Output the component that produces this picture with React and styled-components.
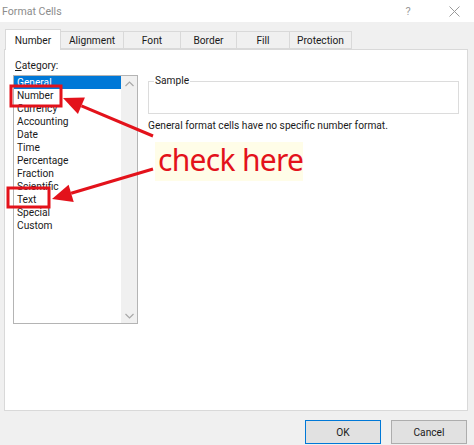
import styled, { createGlobalStyle } from 'styled-components';

const GlobalStyle = createGlobalStyle`
  html, body {
    margin: 0;
    padding: 0;
    background: #f0f0f0;
  }
  * {
    box-sizing: border-box;
  }
`;

const Dialog = styled.div`
  position: relative;
  display: flex;
  flex-direction: column;
  width: 474px;
  height: 445px;
  overflow: hidden;
  background: #f0f0f0;
  font-family: Roboto, 'Noto Sans', sans-serif;
  font-size: 10.2px;
  color: #1a1a1a;
`;

const TitleBar = styled.div`
  display: flex;
  align-items: center;
  height: 22px;
  padding-left: 2px;
  background: #ffffff;
`;

const Title = styled.span`
  flex: 1;
  font-size: 10.6px;
  color: #8c8c8c;
`;

const TitleButton = styled.span`
  display: flex;
  align-items: center;
  justify-content: center;
  width: ${(props) => props.w}px;
  margin-left: ${(props) => props.gap || 0}px;
  font-size: 11px;
  color: #9a9a9a;
`;

const TabRow = styled.div`
  display: flex;
  align-items: flex-end;
  height: 27px;
  padding-left: 5px;
`;

const Tab = styled.div`
  position: relative;
  z-index: ${(props) => (props.active ? 2 : 1)};
  display: flex;
  align-items: center;
  justify-content: center;
  width: ${(props) => props.w}px;
  height: ${(props) => (props.active ? 21 : 18)}px;
  margin-right: -1px;
  margin-bottom: ${(props) => (props.active ? -1 : 0)}px;
  border: 1px solid #d9d9d9;
  border-bottom: ${(props) => (props.active ? 'none' : '1px solid #d9d9d9')};
  background: ${(props) => (props.active ? '#ffffff' : '#f0f0f0')};
  color: #1a1a1a;
`;

const Panel = styled.div`
  display: flex;
  gap: 9px;
  width: 464px;
  height: 362px;
  margin-left: 4px;
  padding: 10px 8px 0 9px;
  border: 1px solid #d9d9d9;
  background: #ffffff;
`;

const LeftColumn = styled.div`
  display: flex;
  flex-direction: column;
  width: 125px;
`;

const FieldLabel = styled.div`
  height: 15px;
  line-height: 12px;
  padding-left: 1px;
  color: #1a1a1a;
`;

const ListBox = styled.div`
  display: flex;
  width: 125px;
  height: 249px;
  margin-left: -1px;
  border: 1px solid #b4b4b4;
  background: #ffffff;
`;

const ListItems = styled.div`
  flex: 1;
  display: flex;
  flex-direction: column;
`;

const ListItem = styled.div`
  height: 13px;
  padding-left: 3px;
  line-height: 13px;
  white-space: nowrap;
  background: ${(props) => (props.selected ? '#0078d7' : 'transparent')};
  color: ${(props) => (props.selected ? '#ffffff' : '#1a1a1a')};
`;

const ScrollTrack = styled.div`
  display: flex;
  flex-direction: column;
  justify-content: space-between;
  align-items: center;
  width: 16px;
  padding: 5px 0 4px;
  background: #f0f0f0;
`;

const RightColumn = styled.div`
  display: flex;
  flex-direction: column;
  flex: 1;
  padding-top: 15px;
`;

const SampleBox = styled.fieldset`
  width: 311px;
  height: 39px;
  margin: 0;
  padding: 0 6px;
  border: 1px solid #dcdcdc;

  legend {
    margin-left: -1px;
    padding: 0 1px;
    font-size: 10.2px;
    line-height: 12px;
    color: #1a1a1a;
  }
`;

const Description = styled.div`
  margin-top: 6px;
  line-height: 12px;
`;

const Footer = styled.div`
  display: flex;
  justify-content: flex-end;
  gap: 10px;
  padding: 9px 7px 0 0;
`;

const Button = styled.div`
  display: flex;
  align-items: center;
  justify-content: center;
  width: ${(props) => props.w}px;
  height: 24px;
  border: 1px solid ${(props) => (props.primary ? '#0078d7' : '#adadad')};
  background: #e1e1e1;
  color: #1a1a1a;
`;

const Annotations = styled.svg`
  position: absolute;
  left: 0;
  top: 0;
  z-index: 5;
  pointer-events: none;
`;

const Callout = styled.div`
  position: absolute;
  left: 155px;
  top: 142px;
  z-index: 4;
  width: 148px;
  height: 39px;
  padding-left: 3px;
  background: #fffde8;
  color: #e3121b;
  font-family: 'Noto Sans', 'Open Sans', sans-serif;
  font-size: 30px;
  line-height: 36px;
  letter-spacing: -0.7px;
  white-space: nowrap;
`;

const categories = [
  'General',
  'Number',
  'Currency',
  'Accounting',
  'Date',
  'Time',
  'Percentage',
  'Fraction',
  'Scientific',
  'Text',
  'Special',
  'Custom',
];

const tabs = [
  ['Number', 56],
  ['Alignment', 64],
  ['Font', 58],
  ['Border', 57],
  ['Fill', 54],
  ['Protection', 63],
];

const Chevron = ({ up }) => (
  <svg width="9" height="6" viewBox="0 0 9 6">
    <path
      d={up ? 'M0.5 5 L4.5 1 L8.5 5' : 'M0.5 1 L4.5 5 L8.5 1'}
      fill="none"
      stroke="#a8a8a8"
      strokeWidth="1.2"
    />
  </svg>
);

const CloseIcon = () => (
  <svg width="11" height="11" viewBox="0 0 11 11">
    <path d="M0.5 0.5 L10.5 10.5 M10.5 0.5 L0.5 10.5" stroke="#9a9a9a" strokeWidth="1" />
  </svg>
);

const Arrow = ({ x1, y1, x2, y2 }) => {
  // head sits at (x2, y2)
  const dx = x2 - x1;
  const dy = y2 - y1;
  const len = Math.sqrt(dx * dx + dy * dy);
  const ux = dx / len;
  const uy = dy / len;
  const head = 20;
  const half = 9;
  const bx = x2 - ux * head;
  const by = y2 - uy * head;
  const pts = [
    `${x2},${y2}`,
    `${bx - uy * half},${by + ux * half}`,
    `${bx + uy * half},${by - ux * half}`,
  ].join(' ');
  return (
    <g>
      <line x1={x1} y1={y1} x2={bx} y2={by} stroke="#e3121b" strokeWidth="3" />
      <polygon points={pts} fill="#e3121b" />
    </g>
  );
};

const App = () => {
  return (
    <>
      <GlobalStyle />
      <Dialog>
        <TitleBar>
          <Title>Format Cells</Title>
          <TitleButton w={20}>?</TitleButton>
          <TitleButton w={40} gap={16}>
            <CloseIcon />
          </TitleButton>
        </TitleBar>
        <TabRow>
          {tabs.map(([label, w], i) => (
            <Tab key={label} w={w} active={i === 0}>
              {label}
            </Tab>
          ))}
        </TabRow>
        <Panel>
          <LeftColumn>
            <FieldLabel>
              <u>C</u>ategory:
            </FieldLabel>
            <ListBox>
              <ListItems>
                {categories.map((c, i) => (
                  <ListItem key={c} selected={i === 0}>
                    {c}
                  </ListItem>
                ))}
              </ListItems>
              <ScrollTrack>
                <Chevron up />
                <Chevron />
              </ScrollTrack>
            </ListBox>
          </LeftColumn>
          <RightColumn>
            <SampleBox>
              <legend>Sample</legend>
            </SampleBox>
            <Description>General format cells have no specific number format.</Description>
          </RightColumn>
        </Panel>
        <Footer>
          <Button w={76} primary>
            OK
          </Button>
          <Button w={76}>Cancel</Button>
        </Footer>
        <Callout>check here</Callout>
        <Annotations width="474" height="445" viewBox="0 0 474 445">
          <rect x="11" y="86" width="50" height="20" fill="none" stroke="#e3121b" strokeWidth="3" />
          <rect x="8" y="188" width="41" height="19" fill="none" stroke="#e3121b" strokeWidth="3" />
          <Arrow x1={153} y1={136} x2={63} y2={98} />
          <Arrow x1={153} y1={169} x2={52} y2={199} />
        </Annotations>
      </Dialog>
    </>
  );
};

export default App;
